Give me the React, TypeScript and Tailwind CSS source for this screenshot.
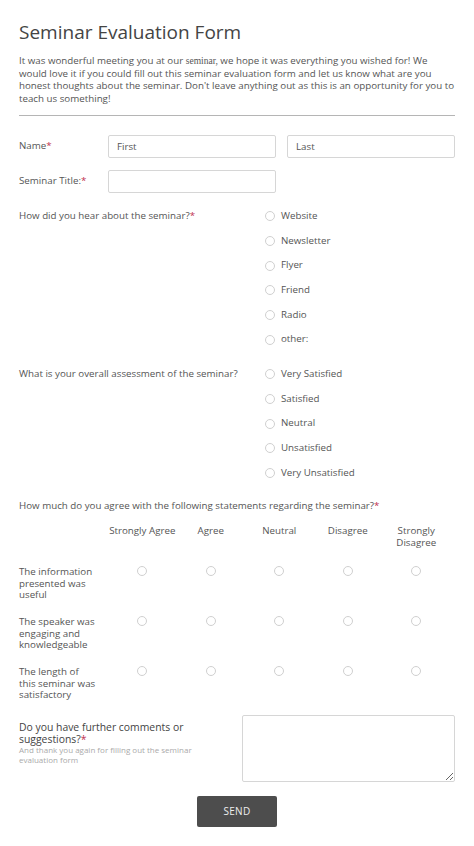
import React from 'react';

const hearOptions = ['Website', 'Newsletter', 'Flyer', 'Friend', 'Radio', 'other:'];
const assessOptions = ['Very Satisfied', 'Satisfied', 'Neutral', 'Unsatisfied', 'Very Unsatisfied'];
const scale = ['Strongly Agree', 'Agree', 'Neutral', 'Disagree', 'Strongly Disagree'];
const statements = [
  'The information presented was useful',
  'The speaker was engaging and knowledgeable',
  'The length of this seminar was satisfactory',
];

function Req() {
  return <span className="text-[#c0304f]">*</span>;
}

function Radio() {
  return <span className="inline-block w-[10px] h-[10px] rounded-full border border-[#d0d0d0] bg-white shrink-0" />;
}

function RadioList({ options }: { options: string[] }) {
  return (
    <div className="flex flex-col">
      {options.map((o) => (
        <label key={o} className="flex items-center gap-[6px] h-[24.7px]">
          <Radio />
          <span>{o}</span>
        </label>
      ))}
    </div>
  );
}

export default function App() {
  return (
    <main
      className="w-[474px] min-h-[846px] bg-white px-[19px] pt-[19px] text-[9.75px] text-[#555]"
      style={{ fontFamily: '"Open Sans", sans-serif' }}
    >
      {/* Header */}
      <h1 className="text-[19px] leading-[26px] text-[#444]">Seminar Evaluation Form</h1>
      <p className="mt-[10px] leading-[12.7px] text-[#555]">
        It was wonderful meeting you at our{' '}
        <span style={{ fontFamily: '"Liberation Serif", serif' }} className="text-[9.5px]">seminar,</span> we hope it was
        everything you wished for! We would love it if you could fill out this seminar evaluation form and let us know
        what are you honest thoughts about the seminar. Don't leave anything out as this is an opportunity for you to
        teach us something!
      </p>
      <hr className="mt-[9px] border-t border-[#b5b5b5]" />

      {/* Name */}
      <div className="flex items-center mt-[19px]">
        <div className="w-[89px]">
          Name<Req />
        </div>
        <div className="flex gap-[11px] flex-1">
          <input
            placeholder="First"
            className="w-[168px] h-[23px] rounded-[2px] border border-[#d6d6d6] px-[8px] text-[9.75px] text-[#555] placeholder:text-[#555] outline-none"
          />
          <input
            placeholder="Last"
            className="flex-1 h-[23px] rounded-[2px] border border-[#d6d6d6] px-[8px] text-[9.75px] text-[#555] placeholder:text-[#555] outline-none"
          />
        </div>
      </div>

      {/* Seminar Title */}
      <div className="flex items-center mt-[12px]">
        <div className="w-[89px]">
          Seminar Title:<Req />
        </div>
        <input className="w-[168px] h-[23px] rounded-[2px] border border-[#d6d6d6] px-[8px] text-[9.75px] outline-none" />
      </div>

      {/* Hear about */}
      <div className="flex mt-[11px]">
        <div className="w-[246px] leading-[24.7px]">
          How did you hear about the seminar?<Req />
        </div>
        <RadioList options={hearOptions} />
      </div>

      {/* Assessment */}
      <div className="flex mt-[10px]">
        <div className="w-[246px] leading-[24.7px]">What is your overall assessment of the seminar?</div>
        <RadioList options={assessOptions} />
      </div>

      {/* Matrix */}
      <div className="mt-[9px] leading-[24.7px]">
        How much do you agree with the following statements regarding the seminar?<Req />
      </div>
      <div className="grid grid-cols-[89px_repeat(5,68.5px)] leading-[11.5px]">
        <div />
        {scale.map((s) => (
          <div key={s} className="text-center pt-[6px] h-[47px]">
            {s}
          </div>
        ))}
        {statements.map((st) => (
          <React.Fragment key={st}>
            <div className="h-[50px] pr-[11px]">{st}</div>
            {scale.map((s) => (
              <div key={s} className="flex justify-center">
                <Radio />
              </div>
            ))}
          </React.Fragment>
        ))}
      </div>

      {/* Comments */}
      <div className="flex mt-[-1px]">
        <div className="w-[223px] pt-[6px]">
          <div className="w-[196px] text-[10.4px] leading-[12px] text-[#444]">
            Do you have further comments or suggestions?<Req />
          </div>
          <div className="w-[196px] text-[8px] leading-[10px] text-[#aaa]">
            And thank you again for filling out the seminar evaluation form
          </div>
        </div>
        <textarea className="flex-1 h-[67px] rounded-[2px] border border-[#d6d6d6] outline-none" />
      </div>

      {/* Send */}
      <div className="flex justify-center mt-[14px]">
        <button className="w-[80px] h-[31px] rounded-[2px] bg-[#4d4d4d] text-[#eee] text-[10px] tracking-wide">
          SEND
        </button>
      </div>
    </main>
  );
}
